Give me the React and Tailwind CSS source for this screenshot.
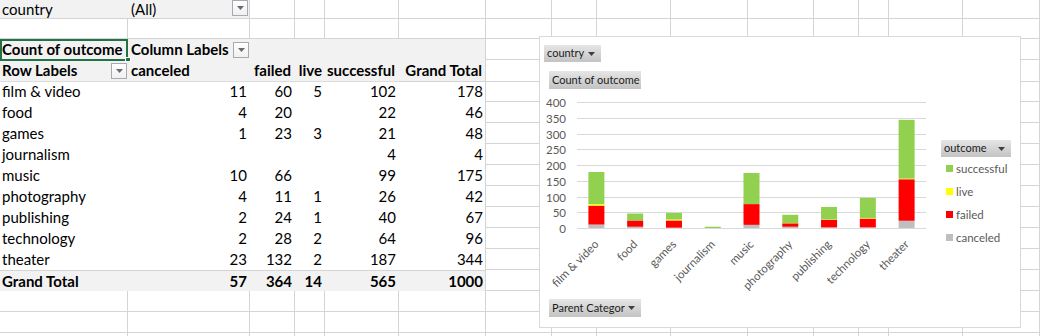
import React from "react";

const ROW = "grid grid-cols-[128px_122px_45px_30px_74px_87px_66px_45px_74px_77px_66px_45px_30px_74px_1fr]";
const GRID = "border-r border-b border-[#d4d4d4]";

const rows = [
    ["film & video", 11, 60, 5, 102, 178],
    ["food", 4, 20, null, 22, 46],
    ["games", 1, 23, 3, 21, 48],
    ["journalism", null, null, null, 4, 4],
    ["music", 10, 66, null, 99, 175],
    ["photography", 4, 11, 1, 26, 42],
    ["publishing", 2, 24, 1, 40, 67],
    ["technology", 2, 28, 2, 64, 96],
    ["theater", 23, 132, 2, 187, 344],
];

const series = [
    { name: "canceled", color: "#bfbfbf" },
    { name: "failed", color: "#ff0000" },
    { name: "live", color: "#ffff00" },
    { name: "successful", color: "#92d050" },
];

// empty spreadsheet cells to the right of the pivot
const Blank = ({ count }) =>
    Array.from({ length: count }).map((_, i) => <div key={i} className={GRID} />);

const Dropdown = () => (
    <div className="w-[16px] h-[16px] border border-[#a9a9b4] bg-linear-to-b from-white to-[#f0f0f0] flex items-center justify-center">
        <svg width="7" height="4" viewBox="0 0 7 4">
            <polygon points="0,0 7,0 3.5,4" fill="#6b6b6b" />
        </svg>
    </div>
);

const Caret = () => (
    <svg width="7" height="4" viewBox="0 0 7 4">
        <polygon points="0,0 7,0 3.5,4" fill="#3f3f3f" />
    </svg>
);

const FieldButton = ({ label, caret = true, className }) => (
    <div
        className={`flex items-center justify-between pl-[3px] pr-[6px] text-[11px] text-[#1b1b1b] bg-linear-to-b from-[#e6e6e6] to-[#c3c3c3] whitespace-nowrap ${className}`}
    >
        <span>{label}</span>
        {caret && <Caret />}
    </div>
);

const PivotChart = () => {
    const y0 = 139;
    const k = 0.3145;
    const step = 349 / 9;
    const ticks = [0, 50, 100, 150, 200, 250, 300, 350, 400];

    return (
        <div className="absolute left-[539px] top-[36px] w-[482px] h-[292px] border border-[#d9d9d9] bg-white flex flex-col">
            <FieldButton label="country" className="ml-[4px] mt-[8px] h-[17px] w-[57px]" />
            <FieldButton label="Count of outcome" caret={false} className="ml-[9px] mt-[9px] h-[18px] w-[92px]" />

            <div className="flex h-[210px]">
                <svg width="390" height="210" className="shrink-0">
                    {ticks.map((v) => {
                        const y = Math.round(y0 - v * k) + 0.5;
                        return (
                            <g key={v}>
                                <line x1="37" x2="386" y1={y} y2={y} stroke="#d9d9d9" strokeWidth="1" />
                                <text x="26" y={y + 4} textAnchor="end" fontSize="11.5" fill="#595959">
                                    {v}
                                </text>
                            </g>
                        );
                    })}
                    {rows.map((r, i) => {
                        const cx = 37 + step * (i + 0.5);
                        const ax = cx + 3;
                        const ay = 156;
                        let acc = 0;
                        return (
                            <g key={r[0]}>
                                {series.map((s, j) => {
                                    const val = r[j + 1] || 0;
                                    const top = y0 - (acc + val) * k;
                                    const h = val * k;
                                    acc += val;
                                    if (!val) return null;
                                    return <rect key={s.name} x={cx - 8} y={top} width="16" height={h} fill={s.color} />;
                                })}
                                <text
                                    x={ax}
                                    y={ay}
                                    textAnchor="end"
                                    fontSize="11.5"
                                    fill="#595959"
                                    transform={`rotate(-45 ${ax} ${ay})`}
                                >
                                    {r[0]}
                                </text>
                            </g>
                        );
                    })}
                </svg>

                <div className="ml-[11px] mt-[51px] w-[70px]">
                    <FieldButton label="outcome" className="h-[17px] w-[70px]" />
                    {[...series].reverse().map((s) => (
                        <div key={s.name} className="h-[23px] flex items-center">
                            <div className="ml-[5px] w-[7px] h-[7px]" style={{ backgroundColor: s.color }} />
                            <span className="ml-[3px] text-[11.5px] text-[#595959]">{s.name}</span>
                        </div>
                    ))}
                </div>
            </div>

            <FieldButton label="Parent Categor" className="ml-[9px] h-[18px] w-[92px]" />
        </div>
    );
};

const App = () => {
    return (
        <div className="relative w-[1040px] h-[336px] overflow-hidden bg-white text-black text-[15px] font-['Lato','Liberation_Sans',sans-serif]">
            {/* report filter */}
            <div className={`${ROW} h-[18px] leading-[18px]`}>
                <div className="bg-[#f2f2f2] border-b border-[#d4d4d4] pl-[2px]">country</div>
                <div className="bg-[#f2f2f2] border-r border-b border-[#d4d4d4] pl-[3px] pr-[1px] flex justify-between">
                    <span>(All)</span>
                    <Dropdown />
                </div>
                <Blank count={13} />
            </div>

            <div className={`${ROW} h-[21px]`}>
                <Blank count={15} />
            </div>

            {/* pivot header */}
            <div className={`${ROW} h-[21px] leading-[21px] font-bold whitespace-nowrap`}>
                <div className="relative bg-[#f2f2f2] pl-[2px]">
                    Count of outcome
                    <div className="absolute left-0 top-0 w-[128px] h-[22px] border-2 border-[#217346]" />
                    <div className="absolute left-[125px] top-[18px] w-[6px] h-[5px] bg-[#217346] border border-white" />
                </div>
                <div className="bg-[#f2f2f2] pl-[3px] pr-[1px] flex items-center justify-between">
                    <span>Column Labels</span>
                    <Dropdown />
                </div>
                <div className="bg-[#f2f2f2]" />
                <div className="bg-[#f2f2f2]" />
                <div className="bg-[#f2f2f2]" />
                <div className="bg-[#f2f2f2] border-r border-[#d4d4d4]" />
                <Blank count={9} />
            </div>

            <div className={`${ROW} h-[21px] leading-[21px] font-bold whitespace-nowrap`}>
                <div className="bg-[#f2f2f2] border-b border-[#dcdcdc] pl-[2px] pr-[1px] flex items-center justify-between">
                    <span>Row Labels</span>
                    <Dropdown />
                </div>
                <div className="bg-[#f2f2f2] border-b border-[#dcdcdc] pl-[3px]">canceled</div>
                <div className="bg-[#f2f2f2] border-b border-[#dcdcdc] text-right pr-[4px]">failed</div>
                <div className="bg-[#f2f2f2] border-b border-[#dcdcdc] text-right pr-[3px]">live</div>
                <div className="bg-[#f2f2f2] border-b border-[#dcdcdc] text-right pr-[4px]">successful</div>
                <div className="bg-[#f2f2f2] border-b border-r border-[#d4d4d4] text-right pr-[3px]">Grand Total</div>
                <Blank count={9} />
            </div>

            {rows.map((r) => (
                <div key={r[0]} className={`${ROW} h-[21px] leading-[21px] whitespace-nowrap`}>
                    <div className="pl-[2px]">{r[0]}</div>
                    <div className="text-right pr-[3px]">{r[1]}</div>
                    <div className="text-right pr-[3px]">{r[2]}</div>
                    <div className="text-right pr-[3px]">{r[3]}</div>
                    <div className="text-right pr-[3px]">{r[4]}</div>
                    <div className="text-right pr-[2px] border-r border-[#d4d4d4]">{r[5]}</div>
                    <Blank count={9} />
                </div>
            ))}

            <div className={`${ROW} h-[21px] leading-[20px] font-bold whitespace-nowrap`}>
                <div className="bg-[#f2f2f2] border-t border-[#d4d4d4] pl-[2px]">Grand Total</div>
                <div className="bg-[#f2f2f2] border-t border-[#d4d4d4] text-right pr-[3px]">57</div>
                <div className="bg-[#f2f2f2] border-t border-[#d4d4d4] text-right pr-[3px]">364</div>
                <div className="bg-[#f2f2f2] border-t border-[#d4d4d4] text-right pr-[3px]">14</div>
                <div className="bg-[#f2f2f2] border-t border-[#d4d4d4] text-right pr-[3px]">565</div>
                <div className="bg-[#f2f2f2] border-t border-r border-[#d4d4d4] text-right pr-[2px]">1000</div>
                <Blank count={9} />
            </div>

            {[0, 1, 2].map((i) => (
                <div key={i} className={`${ROW} h-[21px]`}>
                    <Blank count={15} />
                </div>
            ))}

            <PivotChart />
        </div>
    );
};

export default App;
